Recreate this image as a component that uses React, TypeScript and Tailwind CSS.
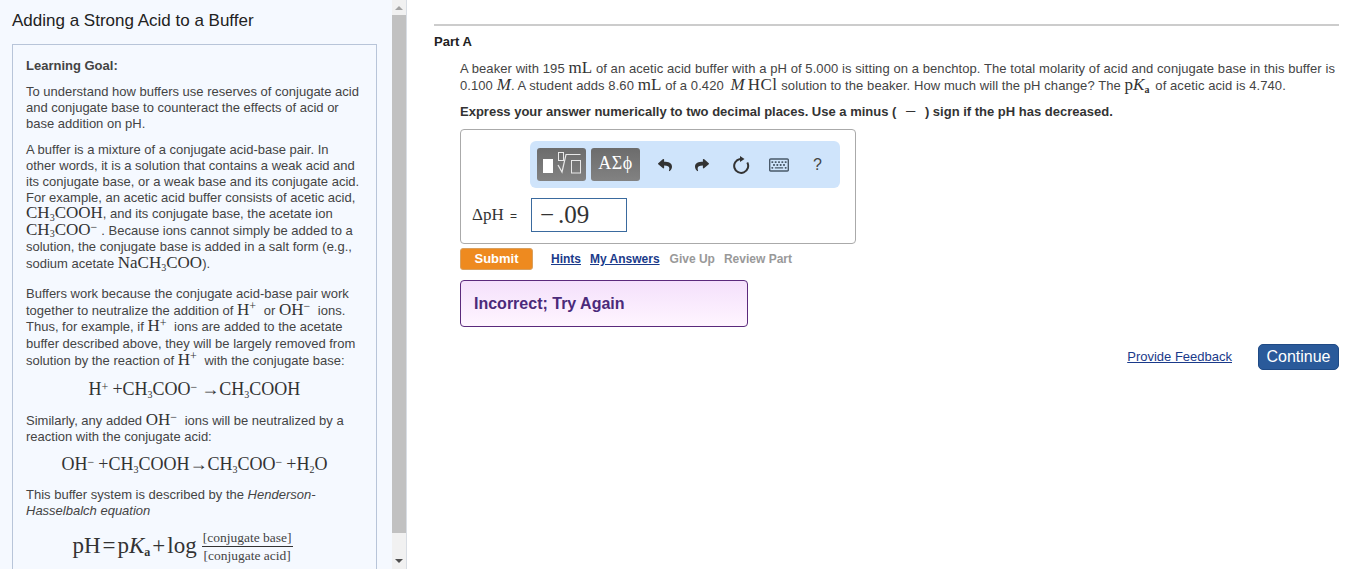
import { ReactNode } from "react";
import { FaReply, FaShare, FaRegKeyboard } from "react-icons/fa";

const M = ({ children }: { children: ReactNode }) => (
  <span className="font-['Liberation_Serif',serif] text-[17px] leading-[0] text-[#333]">{children}</span>
);

// lines holding math sit slightly taller than plain text
const Line = ({ children }: { children: ReactNode }) => <span className="block leading-[16.7px]">{children}</span>;

const Sub = ({ children }: { children: ReactNode }) => <sub className="text-[10px]">{children}</sub>;
const Sup = ({ children }: { children: ReactNode }) => <sup className="text-[12px] top-[-0.35em] pr-[4px]">{children}</sup>;

const Equation = ({ children, className }: { children: ReactNode; className?: string }) => (
  <div className={`text-center font-['Liberation_Serif',serif] text-[18px] leading-[20px] text-[#333] ${className}`}>
    {children}
  </div>
);

const ScrollBar = () => (
  <div className="w-[15px] shrink-0 bg-[#f1f1f1] flex flex-col border-r border-[#d8dde4]">
    <div className="h-[15px] flex items-center justify-center">
      <div className="w-0 h-0 border-x-[4px] border-x-transparent border-b-[4px] border-b-[#a3a3a3]" />
    </div>
    <div className="h-[518px] bg-[#c1c1c1]" />
    <div className="flex-1 flex items-center justify-center pt-[20px]">
      <div className="w-0 h-0 border-x-[4px] border-x-transparent border-t-[4px] border-t-[#505050]" />
    </div>
  </div>
);

const LeftPanel = () => (
  <div className="w-[407px] shrink-0 flex bg-[#f5f9ff] overflow-hidden">
    <div className="w-[392px] shrink-0 pl-[12px] pr-[15px] pt-[10px]">
      <h1 className="text-[17px] leading-[21px] font-normal text-[#222]">Adding a Strong Acid to a Buffer</h1>
      <div className="mt-[13px] border border-[#b8c5d9] px-[13px] pt-[13px] pb-[20px] text-[13px] leading-[16px] text-[#444] h-[600px]">
        <p className="font-bold">Learning Goal:</p>
        <p className="mt-[10px]">
          To understand how buffers use reserves of conjugate acid
          <br />
          and conjugate base to counteract the effects of acid or
          <br />
          base addition on pH.
        </p>
        <div className="mt-[10px]">
          A buffer is a mixture of a conjugate acid-base pair. In
          <br />
          other words, it is a solution that contains a weak acid and
          <br />
          its conjugate base, or a weak base and its conjugate acid.
          <br />
          For example, an acetic acid buffer consists of acetic acid,
          <Line><M>CH<Sub>3</Sub>COOH</M>, and its conjugate base, the acetate ion</Line>
          <Line><M>CH<Sub>3</Sub>COO<Sup>−</Sup></M>. Because ions cannot simply be added to a</Line>
          <Line>solution, the conjugate base is added in a salt form (e.g.,</Line>
          <Line>sodium acetate <M>NaCH<Sub>3</Sub>COO</M>).</Line>
        </div>
        <div className="mt-[13px]">
          <Line>Buffers work because the conjugate acid-base pair work</Line>
          <Line>together to neutralize the addition of <M>H<Sup>+</Sup></M> or <M>OH<Sup>−</Sup></M> ions.</Line>
          <Line>Thus, for example, if <M>H<Sup>+</Sup></M> ions are added to the acetate</Line>
          <Line>buffer described above, they will be largely removed from</Line>
          <Line>solution by the reaction of <M>H<Sup>+</Sup></M> with the conjugate base:</Line>
        </div>
        <Equation className="mt-[10px]">
          H<Sup>+</Sup>+CH<Sub>3</Sub>COO<Sup>−</Sup>→CH<Sub>3</Sub>COOH
        </Equation>
        <div className="mt-[14px]">
          Similarly, any added <M>OH<Sup>−</Sup></M> ions will be neutralized by a
          <br />
          reaction with the conjugate acid:
        </div>
        <Equation className="mt-[9px]">
          OH<Sup>−</Sup>+CH<Sub>3</Sub>COOH→CH<Sub>3</Sub>COO<Sup>−</Sup>+H<Sub>2</Sub>O
        </Equation>
        <p className="mt-[13px]">
          This buffer system is described by the <em>Henderson-</em>
          <br />
          <em>Hasselbalch equation</em>
        </p>
        <div className="mt-[9px] pr-[24px] flex items-center justify-center font-['Liberation_Serif',serif] text-[#333]">
          <span className="text-[23px] leading-[36px]">
            pH<span className="mx-[2px]">=</span>p<em>K</em><sub className="text-[12px] font-bold">a</sub><span className="mx-[2px]">+</span>log
          </span>
          <span className="ml-[5px] flex flex-col items-center text-[13.5px] leading-[17px] text-[#444]">
            <span className="border-b border-[#333] px-[1px]">[conjugate base]</span>
            <span>[conjugate acid]</span>
          </span>
        </div>
      </div>
    </div>
    <ScrollBar />
  </div>
);

const TemplateIcon = () => (
  <svg width="38" height="22" viewBox="0 0 38 22" fill="none" stroke="#e8e8e8" strokeWidth="1" className="mb-[3px]">
    <rect x="0" y="7" width="10" height="14" fill="#fff" stroke="none" />
    <rect x="15.5" y="0.5" width="5" height="8" />
    <path d="M15 13 L19 20 L23 2.5 H37.5" strokeWidth="1.2" />
    <rect x="28.5" y="8.5" width="9" height="12.5" />
  </svg>
);

const ResetIcon = () => (
  <svg width="18" height="18" viewBox="0 0 18 18" fill="none" stroke="#333" strokeWidth="2" className="ml-[23px]">
    <path d="M15.3 6.5 A7 7 0 1 1 8 3" />
    <polygon points="8,0 8,6 12.5,3" fill="#333" stroke="none" />
  </svg>
);

const ToolButton = ({ children }: { children: ReactNode }) => (
  <div className="w-[49px] h-[33px] rounded-[3px] bg-gradient-to-b from-[#6c6c6c] to-[#828282] flex items-center justify-center text-white">
    {children}
  </div>
);

const Toolbar = () => (
  <div className="ml-[69px] w-[310px] h-[47px] rounded-[6px] bg-[#cfe4fb] flex items-center pl-[7px] text-[#333]">
    <ToolButton>
      <TemplateIcon />
    </ToolButton>
    <div className="ml-[5px]">
      <ToolButton>
        <span className="font-['Liberation_Serif',serif] text-[18px] leading-[18px] mb-[3px] tracking-[0.5px]">ΑΣϕ</span>
      </ToolButton>
    </div>
    <FaReply className="ml-[18px] text-[14px]" />
    <FaShare className="ml-[23px] text-[14px]" />
    <ResetIcon />
    <FaRegKeyboard className="ml-[19px] text-[20px] text-[#4a5a6a]" />
    <span className="ml-[24px] text-[16px] text-[#444]">?</span>
  </div>
);

const RightPanel = () => (
  <div className="flex-1 pl-[27px] pr-[18px] pt-[24px] text-[13px] leading-[16px] text-[#444]">
    <div className="h-[2px] bg-[#ccc]" />
    <h2 className="mt-[8px] text-[13px] leading-[16px] font-bold text-[#222]">Part A</h2>
    <div className="ml-[26px]">
      <div className="mt-[11px] tracking-[0.08px]">
        A beaker with 195 <M>mL</M> of an acetic acid buffer with a pH of 5.000 is sitting on a benchtop. The total molarity of acid and conjugate base in this buffer is
        <span className="block leading-[17px]">
          0.100 <M><em>M</em></M>. A student adds 8.60 <M>mL</M> of a 0.420 <span className="ml-[3px]"><M><em>M</em><span className="ml-[3px] tracking-[0.5px]">HCl</span></M></span> solution to the beaker. How much will the pH change? The <M>p<em>K</em><sub className="text-[10px] font-bold">a</sub></M> <span className="ml-[2px]">of acetic acid is 4.740.</span>
        </span>
      </div>
      <p className="mt-[10px] font-bold text-[#333]">
        Express your answer numerically to two decimal places. Use a minus ({" "}
        <span className="px-[5px] font-normal font-['Liberation_Serif',serif] text-[20px] leading-[0] align-[-2px]">−</span>{" "}
        ) sign if the pH has decreased.
      </p>
      <div className="mt-[9px] w-[396px] h-[115px] border border-[#aaa] rounded-[4px] pt-[11px]">
        <Toolbar />
        <div className="mt-[10px] flex items-center pl-[11px]">
          <span className="w-[59px] text-[12px] text-[#333]">
            <span className="font-['Liberation_Serif',serif] text-[17px] mr-[3px]">ΔpH</span> =
          </span>
          <div className="w-[96px] h-[34px] border border-[#3a6a9e] pl-[8px] flex items-center font-['Liberation_Serif',serif] text-[25px] text-[#333]">
            −<span className="ml-[4px]">.09</span>
          </div>
        </div>
      </div>
      <div className="mt-[4px] flex items-center font-bold text-[12px]">
        <button className="w-[73px] h-[22px] rounded-[3px] bg-[#ee8a1f] border border-[#d9a05f] text-white text-[13px]">Submit</button>
        <a className="ml-[18px] text-[#1a3a8a] underline">Hints</a>
        <a className="ml-[9px] text-[#1a3a8a] underline">My Answers</a>
        <span className="ml-[10px] text-[#999]">Give Up</span>
        <span className="ml-[9px] text-[#999]">Review Part</span>
      </div>
      <div className="mt-[10px] w-[288px] h-[47px] rounded-[4px] border border-[#5b2a7c] bg-gradient-to-b from-[#f4e0fb] to-[#fff5ff] flex items-center pl-[13px] text-[16px] font-bold text-[#4b2a7a]">
        Incorrect; Try Again
      </div>
    </div>
    <div className="mt-[17px] flex items-center justify-end">
      <a className="text-[13px] text-[#1a3a8a] underline">Provide Feedback</a>
      <button className="ml-[26px] w-[81px] h-[26px] rounded-[5px] bg-[#2a5a9a] border border-[#1f4a85] text-white text-[16px]">Continue</button>
    </div>
  </div>
);

export default function App() {
  return (
    <div className="h-[569px] w-full flex overflow-hidden bg-white font-['Liberation_Sans',Arial,sans-serif]">
      <LeftPanel />
      <RightPanel />
    </div>
  );
}
